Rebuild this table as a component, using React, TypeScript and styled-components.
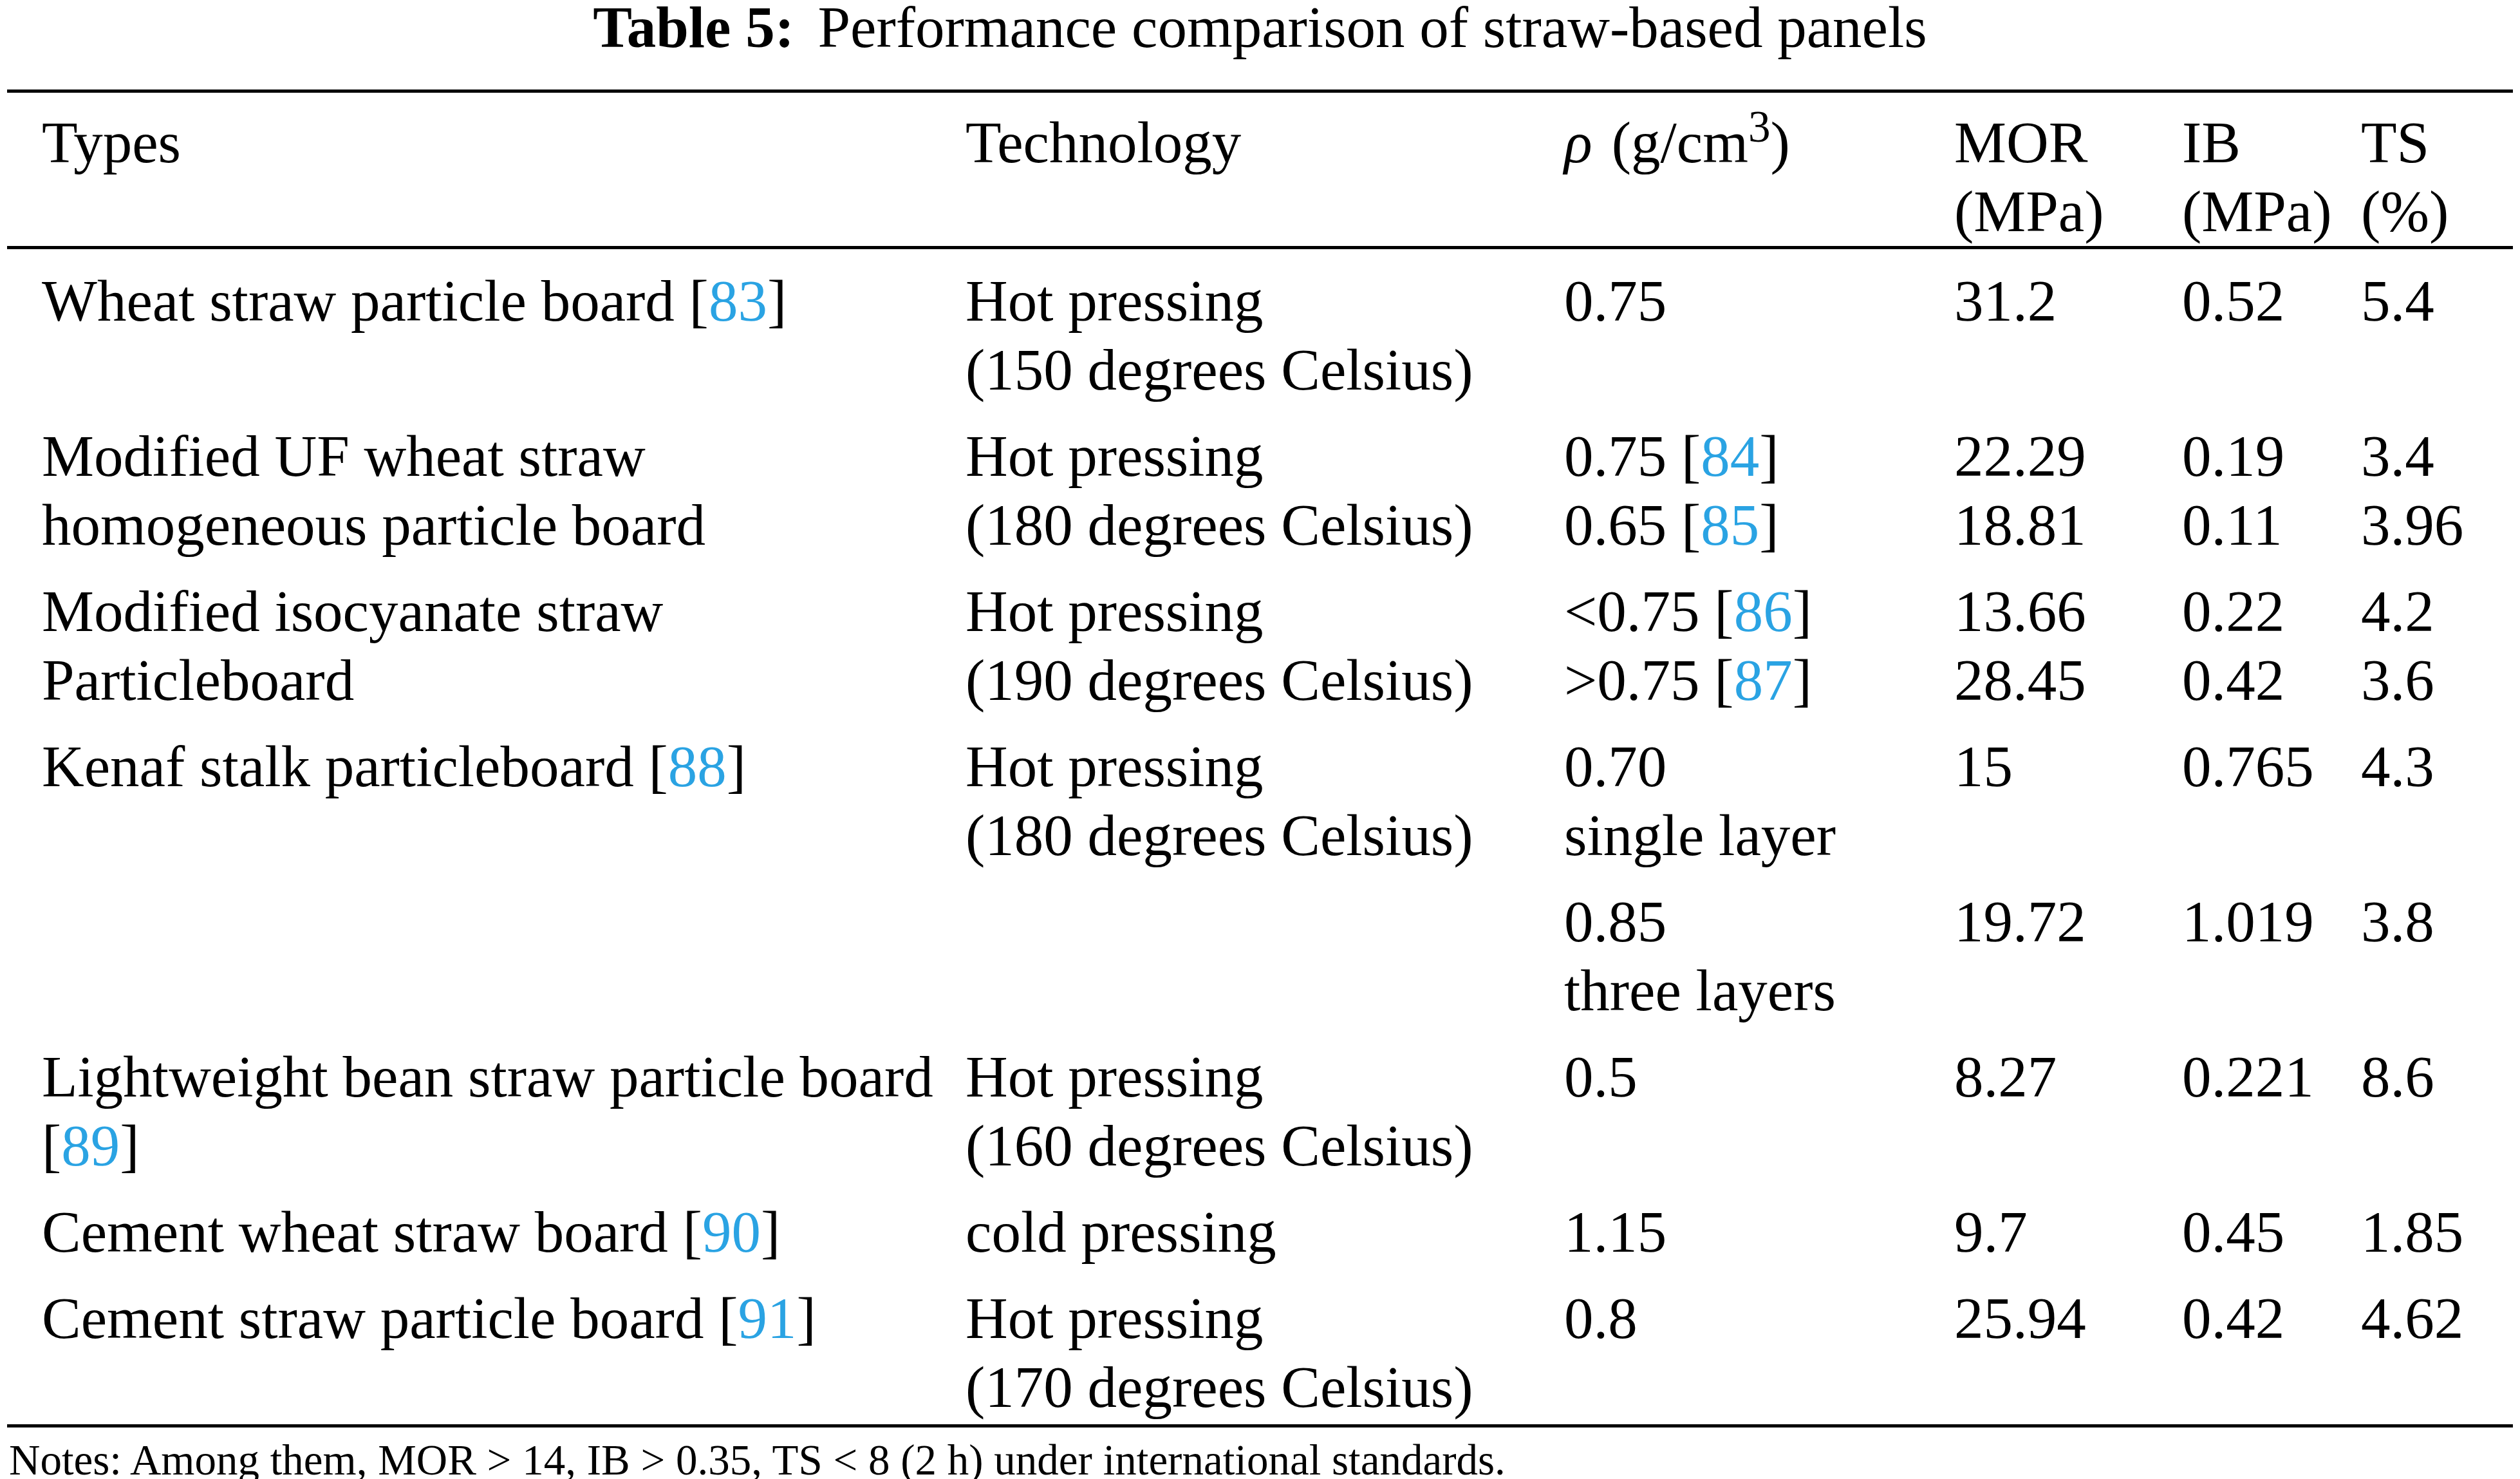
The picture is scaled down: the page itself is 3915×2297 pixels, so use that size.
import React from 'react';
import styled, { createGlobalStyle } from 'styled-components';

const GlobalStyle = createGlobalStyle`
  html,
  body {
    margin: 0;
    padding: 0;
    background: #fff;
  }
  body {
    font-family: 'Liberation Serif', 'Times New Roman', serif;
    color: #000;
  }
`;

const Page = styled.div`
  width: 3915px;
  box-sizing: border-box;
  padding: 0 11px;
`;

const Caption = styled.div`
  font-size: 91px;
  line-height: 86px;
  text-align: center;
  margin-bottom: 53px;
  white-space: nowrap;
`;

const CaptionLabel = styled.b`
  font-weight: 700;
  margin-right: 0.4em;
`;

const Table = styled.div`
  border-top: 5px solid #000;
  border-bottom: 5px solid #000;
  font-size: 91px;
  line-height: 107px;
`;

interface RowProps {
  $head?: boolean;
}
const Row = styled.div<RowProps>`
  display: grid;
  grid-template-columns: 1435px 930px 606px 354px 278px 1fr;
  padding: ${({ $head }) => ($head ? '24px 0 0 54px' : '27px 0 0 54px')};
  border-bottom: ${({ $head }) => ($head ? '5px solid #000' : 'none')};

  &:last-child {
    padding-bottom: 4px;
  }
`;

const Cell = styled.div`
  white-space: nowrap;
`;

const Ref = styled.span`
  color: #2aa3e3;
`;

const Rho = styled.i`
  margin-right: 0.33em;
`;

const Sup = styled.sup`
  font-size: 0.76em;
  line-height: 0;
  vertical-align: 0.46em;
`;

const Notes = styled.div`
  font-size: 67px;
  line-height: 1.2;
  margin-top: 10px;
  padding-left: 3px;
  white-space: nowrap;
`;

const cite = (n: number) => (
  <>
    [<Ref>{n}</Ref>]
  </>
);

type Cells = React.ReactNode[];

const header: Cells = [
  'Types',
  'Technology',
  <>
    <Rho>ρ</Rho>(g/cm<Sup>3</Sup>)
  </>,
  <>
    MOR
    <br />
    (MPa)
  </>,
  <>
    IB
    <br />
    (MPa)
  </>,
  <>
    TS
    <br />
    (%)
  </>,
];

const rows: Cells[] = [
  [
    <>Wheat straw particle board {cite(83)}</>,
    <>
      Hot pressing
      <br />
      (150 degrees Celsius)
    </>,
    '0.75',
    '31.2',
    '0.52',
    '5.4',
  ],
  [
    <>
      Modified UF wheat straw
      <br />
      homogeneous particle board
    </>,
    <>
      Hot pressing
      <br />
      (180 degrees Celsius)
    </>,
    <>
      0.75 {cite(84)}
      <br />
      0.65 {cite(85)}
    </>,
    <>
      22.29
      <br />
      18.81
    </>,
    <>
      0.19
      <br />
      0.11
    </>,
    <>
      3.4
      <br />
      3.96
    </>,
  ],
  [
    <>
      Modified isocyanate straw
      <br />
      Particleboard
    </>,
    <>
      Hot pressing
      <br />
      (190 degrees Celsius)
    </>,
    <>
      {'<'}0.75 {cite(86)}
      <br />
      {'>'}0.75 {cite(87)}
    </>,
    <>
      13.66
      <br />
      28.45
    </>,
    <>
      0.22
      <br />
      0.42
    </>,
    <>
      4.2
      <br />
      3.6
    </>,
  ],
  [
    <>Kenaf stalk particleboard {cite(88)}</>,
    <>
      Hot pressing
      <br />
      (180 degrees Celsius)
    </>,
    <>
      0.70
      <br />
      single layer
    </>,
    '15',
    '0.765',
    '4.3',
  ],
  [
    '',
    '',
    <>
      0.85
      <br />
      three layers
    </>,
    '19.72',
    '1.019',
    '3.8',
  ],
  [
    <>
      Lightweight bean straw particle board
      <br />
      {cite(89)}
    </>,
    <>
      Hot pressing
      <br />
      (160 degrees Celsius)
    </>,
    '0.5',
    '8.27',
    '0.221',
    '8.6',
  ],
  [<>Cement wheat straw board {cite(90)}</>, 'cold pressing', '1.15', '9.7', '0.45', '1.85'],
  [
    <>Cement straw particle board {cite(91)}</>,
    <>
      Hot pressing
      <br />
      (170 degrees Celsius)
    </>,
    '0.8',
    '25.94',
    '0.42',
    '4.62',
  ],
];

const App = () => {
  return (
    <>
      <GlobalStyle />
      <Page>
        <Caption>
          <CaptionLabel>Table 5:</CaptionLabel>Performance comparison of straw-based panels
        </Caption>
        <Table>
          <Row $head>
            {header.map((cell, index) => (
              <Cell key={index}>{cell}</Cell>
            ))}
          </Row>
          {rows.map((row, rowIndex) => (
            <Row key={rowIndex}>
              {row.map((cell, index) => (
                <Cell key={index}>{cell}</Cell>
              ))}
            </Row>
          ))}
        </Table>
        <Notes>
          Notes: Among them, MOR {'>'} 14, IB {'>'} 0.35, TS {'<'} 8 (2 h) under international standards.
        </Notes>
      </Page>
    </>
  );
};

export default App;
